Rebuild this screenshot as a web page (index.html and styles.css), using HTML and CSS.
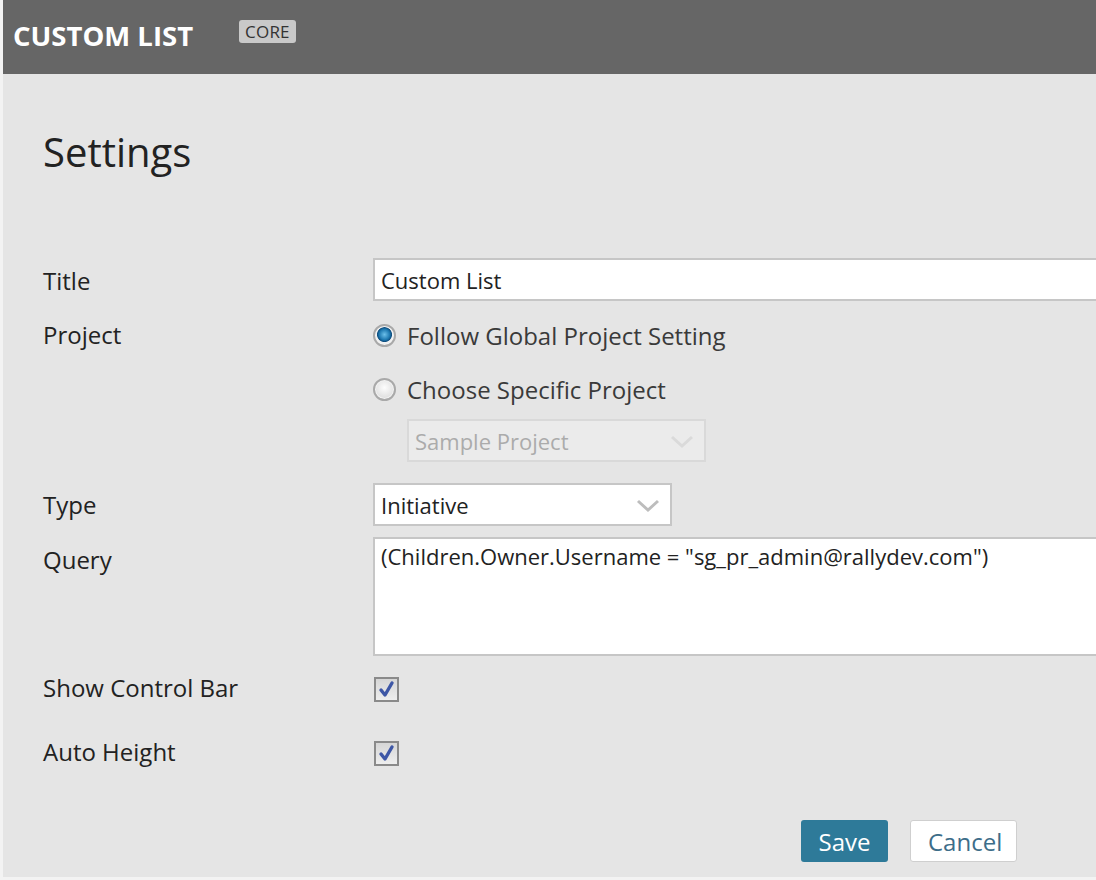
FILE: index.html
```html
<!DOCTYPE html>
<html lang="en">
<head>
  <meta charset="UTF-8" />
  <title>Custom List - Settings</title>
  <link rel="stylesheet" href="styles.css">
</head>
<body>
  <div class="app">
    <div class="app-header">
      <span class="app-title">CUSTOM LIST</span>
      <span class="badge">CORE</span>
    </div>

    <div class="settings">
      <h1>Settings</h1>

      <div class="field field-title">
        <label class="field-label">Title</label>
        <input class="text-input" type="text" value="Custom List" />
      </div>

      <div class="field field-project">
        <label class="field-label">Project</label>
        <div class="radio-group">
          <div class="radio-row">
            <span class="radio checked"></span>
            <span class="radio-text">Follow Global Project Setting</span>
          </div>
          <div class="radio-row second">
            <span class="radio"></span>
            <span class="radio-text">Choose Specific Project</span>
          </div>
          <div class="combo disabled">
            <span class="combo-value">Sample Project</span>
            <svg class="chevron" width="24" height="14" viewBox="0 0 24 14"><polyline points="2,2 12,11 22,2" fill="none" stroke="#dadada" stroke-width="3"/></svg>
          </div>
        </div>
      </div>

      <div class="field field-type">
        <label class="field-label">Type</label>
        <div class="combo">
          <span class="combo-value">Initiative</span>
          <svg class="chevron" width="24" height="14" viewBox="0 0 24 14"><polyline points="2,2 12,11 22,2" fill="none" stroke="#bdbdbd" stroke-width="3"/></svg>
        </div>
      </div>

      <div class="field field-query">
        <label class="field-label">Query</label>
        <textarea class="text-area">(Children.Owner.Username = "sg_pr_admin@rallydev.com")</textarea>
      </div>

      <div class="field field-check">
        <label class="field-label">Show Control Bar</label>
        <span class="checkbox">
          <svg width="20" height="20" viewBox="0 0 20 20"><path d="M4 10 L8 15 L15 3" fill="none" stroke="#3e57a6" stroke-width="3.4" stroke-linecap="round" stroke-linejoin="round"/></svg>
        </span>
      </div>

      <div class="field field-check second">
        <label class="field-label">Auto Height</label>
        <span class="checkbox">
          <svg width="20" height="20" viewBox="0 0 20 20"><path d="M4 10 L8 15 L15 3" fill="none" stroke="#3e57a6" stroke-width="3.4" stroke-linecap="round" stroke-linejoin="round"/></svg>
        </span>
      </div>

      <div class="buttons">
        <button class="btn btn-primary">Save</button>
        <button class="btn btn-secondary">Cancel</button>
      </div>
    </div>
  </div>
</body>
</html>
```

FILE: styles.css
```css
body {
  margin: 0;
  padding-left: 3px;
  background: #f3f3f3;
  font-family: 'Open Sans', 'Noto Sans', sans-serif;
  color: #222;
  overflow: hidden;
}
.app {
  height: 877px;
  background: #e5e5e5;
  overflow: hidden;
}
.app-header {
  height: 74px;
  background: #666666;
  display: flex;
  align-items: center;
  padding-left: 10px;
}
.app-title {
  color: #fff;
  font-weight: bold;
  font-size: 27.5px;
  margin-top: -4px;
}
.badge {
  margin-left: 46px;
  margin-top: -12px;
  background: #c9c9c9;
  color: #333;
  font-size: 17px;
  line-height: 23px;
  padding: 0 6px;
  border-radius: 3px;
  letter-spacing: 0.2px;
}
.settings {
  padding-left: 40px;
}
h1 {
  font-weight: normal;
  font-size: 40px;
  line-height: 48px;
  margin: 54px 0 82px;
  color: #222;
}
.field {
  display: flex;
  align-items: flex-start;
}
.field-label {
  width: 330px;
  flex: none;
  font-size: 24px;
  color: #222;
}
.field-title .field-label { line-height: 45px; height: 43px; }
.text-input {
  flex: none;
  width: 800px;
  height: 43px;
  box-sizing: border-box;
  border: 2px solid #c6c6c6;
  background: #fff;
  font-family: inherit;
  font-size: 22px;
  color: #222;
  padding: 0 6px;
  outline: none;
}
.field-project {
  margin-top: 14px;
}
.field-project .field-label { line-height: 40px; }
.radio-row {
  display: flex;
  align-items: center;
  height: 40px;
}
.radio-row.second { margin-top: 14px; }
.radio {
  width: 19px;
  height: 19px;
  border-radius: 50%;
  border: 2px solid #a9a9a9;
  background: radial-gradient(circle at 50% 40%, #fdfdfd 0%, #e4e4e4 60%, #cfcfcf 100%);
  box-shadow: inset 0 0 0 1px #f4f4f4;
  margin-right: 11px;
}
.radio.checked {
  background: radial-gradient(circle at 50% 45%, #6cc0ea 0%, #1d78b0 38%, #0f4f80 50%, #f2f2f2 56%, #d9d9d9 100%);
}
.radio-text {
  font-size: 24px;
  color: #3a3a3a;
}
.combo {
  flex: none;
  width: 299px;
  height: 43px;
  box-sizing: border-box;
  border: 2px solid #c6c6c6;
  background: #fff;
  display: flex;
  align-items: center;
  justify-content: space-between;
  padding: 0 10px 0 6px;
}
.combo-value {
  font-size: 22px;
  color: #222;
}
.combo.disabled {
  margin-top: 10px;
  margin-left: 34px;
  background: #ebebeb;
  border-color: #d9d9d9;
}
.combo.disabled .combo-value { color: #ababab; }
.chevron { margin-top: 2px; }
.field-type {
  margin-top: 21px;
}
.field-type .field-label { line-height: 43px; height: 43px; }
.field-query {
  margin-top: 11px;
}
.field-query .field-label { line-height: 46px; }
.text-area {
  flex: none;
  width: 800px;
  height: 119px;
  box-sizing: border-box;
  border: 2px solid #c6c6c6;
  background: #fff;
  font-family: inherit;
  font-size: 22px;
  color: #222;
  padding: 2px 6px;
  resize: none;
  outline: none;
}
.field-check {
  margin-top: 21px;
}
.field-check.second { margin-top: 39px; }
.field-check .field-label {
  line-height: 22px;
}
.checkbox {
  width: 25px;
  height: 25px;
  box-sizing: border-box;
  border: 2px solid #8a8a8a;
  background: linear-gradient(#d6d6d6, #eeeeee);
  display: flex;
  align-items: center;
  justify-content: center;
  margin-left: 1px;
}
.buttons {
  display: flex;
  gap: 22px;
  margin-top: 54px;
  margin-left: 758px;
}
.btn {
  height: 42px;
  font-family: inherit;
  font-size: 24px;
  padding: 0 17px;
  border-radius: 3px;
  cursor: pointer;
}
.btn-primary {
  background: #2e7a99;
  color: #fff;
  border: none;
  width: 87px;
}
.btn-secondary {
  background: #fff;
  color: #3d6d89;
  border: 1px solid #cfcfcf;
  width: 107px;
}
```
